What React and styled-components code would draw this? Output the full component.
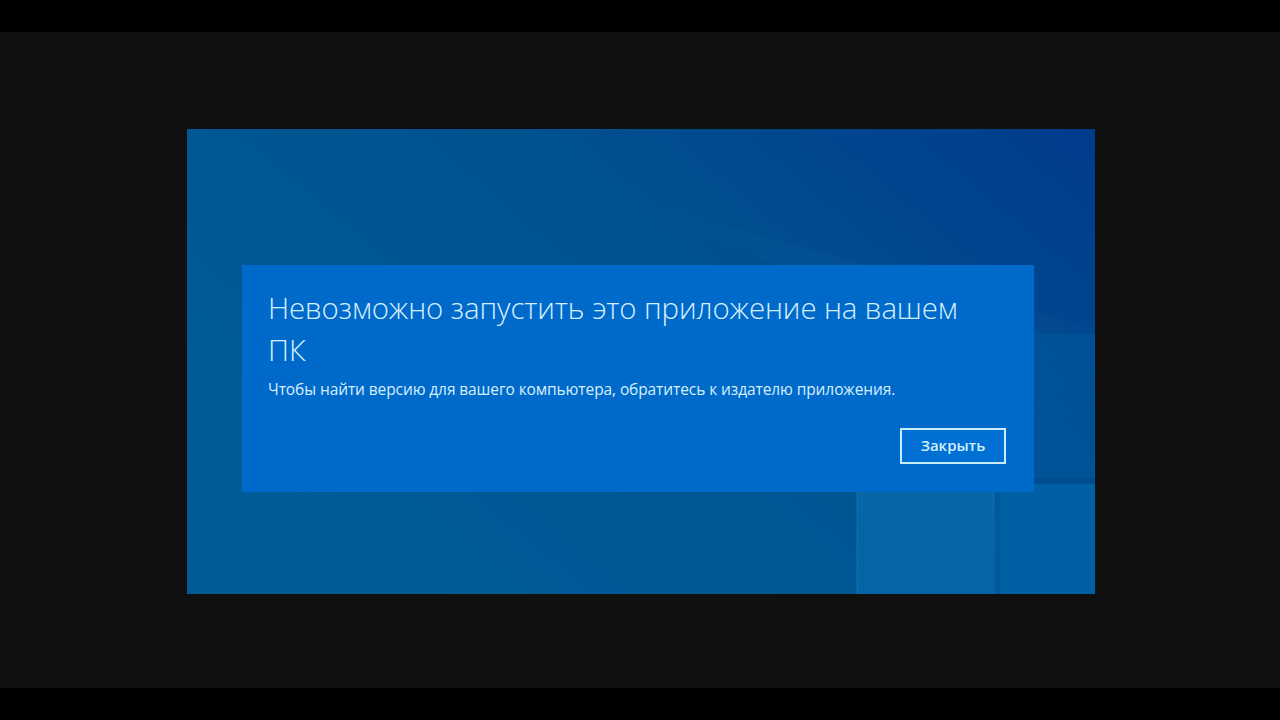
import React from "react";
import styled, { createGlobalStyle } from "styled-components";

const Global = createGlobalStyle`
  html, body { margin: 0; padding: 0; background: #101010; }
  body { font-family: "Open Sans", "Noto Sans", sans-serif; }
`;

const Page = styled.div`
  width: 1280px;
  height: 720px;
  display: flex;
  flex-direction: column;
  background: #101010;
  overflow: hidden;
`;

const Letterbox = styled.div`
  height: 32px;
  flex: none;
  background: #000;
`;

const Stage = styled.div`
  flex: 1;
  display: flex;
  justify-content: center;
  align-items: flex-start;
  padding-top: 97px;
  padding-left: 2px;
`;

const Desktop = styled.div`
  position: relative;
  width: 908px;
  height: 465px;
  padding: 136px 0 0 55px;
  box-sizing: border-box;
  background: #005690;
  overflow: hidden;
`;

const Wallpaper = styled.svg`
  position: absolute;
  inset: 0;
  width: 100%;
  height: 100%;
  display: block;
`;

const Dialog = styled.section`
  position: relative;
  width: 792px;
  height: 227px;
  box-sizing: border-box;
  background: #006aca;
  padding: 22px 28px 0 26px;
  display: flex;
  flex-direction: column;
  color: #d6efff;
`;

const Title = styled.h1`
  margin: 0;
  font-family: "Open Sans", "Noto Sans", sans-serif;
  font-weight: 300;
  font-size: 29.4px;
  line-height: 42px;
  letter-spacing: -0.1px;
  width: 720px;
`;

const Message = styled.p`
  margin: 8px 0 0 0;
  font-family: "Open Sans", "Noto Sans", sans-serif;
  font-weight: 400;
  font-size: 15.5px;
  line-height: 20px;
  letter-spacing: -0.1px;
  white-space: nowrap;
`;

const Actions = styled.div`
  display: flex;
  justify-content: flex-end;
  margin-top: 29px;
`;

const Button = styled.button`
  width: 106px;
  height: 36px;
  box-sizing: border-box;
  border: 2px solid #c9ecff;
  background: #0070d4;
  color: #d3efff;
  font-family: "Open Sans", "Noto Sans", sans-serif;
  font-weight: 600;
  font-size: 15px;
  padding: 0 0 2px 0;
  cursor: pointer;
`;

export default function App() {
  return (
    <>
      <Global />
      <Page>
        <Letterbox />
        <Stage>
          <Desktop>
            <Wallpaper viewBox="0 0 908 465" preserveAspectRatio="none">
              <defs>
                <linearGradient id="base" x1="0" y1="0.6" x2="1" y2="0">
                  <stop offset="0" stopColor="#005c96" />
                  <stop offset="0.55" stopColor="#00518f" />
                  <stop offset="1" stopColor="#003b8c" />
                </linearGradient>
                <linearGradient id="beam" x1="0.3" y1="0.1" x2="1" y2="0.85">
                  <stop offset="0" stopColor="#1a70b0" stopOpacity="0" />
                  <stop offset="0.5" stopColor="#1a70b0" stopOpacity="0.15" />
                  <stop offset="1" stopColor="#1a74b4" stopOpacity="0" />
                </linearGradient>
                <linearGradient id="pane" x1="0" y1="0" x2="0" y2="1">
                  <stop offset="0" stopColor="#0666a6" />
                  <stop offset="1" stopColor="#0464a4" />
                </linearGradient>
              </defs>
              <rect x="0" y="0" width="908" height="465" fill="url(#base)" />
              <polygon points="300,30 908,200 908,320 560,120" fill="url(#beam)" />
              <rect x="847" y="205" width="61" height="144" fill="#00589c" opacity="0.6" />
              <rect x="847" y="355" width="61" height="110" fill="#0060a4" />
              <rect x="847" y="349" width="61" height="6" fill="#004c90" />
              <rect x="670" y="355" width="138" height="110" fill="url(#pane)" />
              <rect x="669" y="355" width="2" height="110" fill="#1a78b2" opacity="0.5" />
              <rect x="808" y="355" width="5" height="110" fill="#00579a" />
              <rect x="813" y="355" width="34" height="110" fill="#0060a4" />
              <rect x="0" y="363" width="670" height="102" fill="#005a98" opacity="0.4" />
            </Wallpaper>
            <Dialog>
              <Title>Невозможно запустить это приложение на вашем ПК</Title>
              <Message>
                Чтобы найти версию для вашего компьютера, обратитесь к издателю приложения.
              </Message>
              <Actions>
                <Button>Закрыть</Button>
              </Actions>
            </Dialog>
          </Desktop>
        </Stage>
        <Letterbox />
      </Page>
    </>
  );
}
